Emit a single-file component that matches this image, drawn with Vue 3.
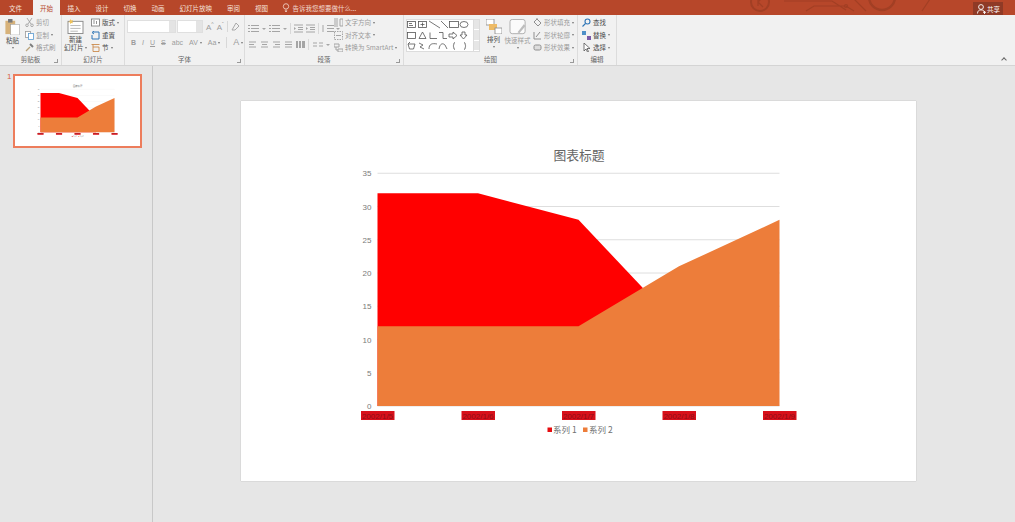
<script setup>
const tabs = ['文件', '开始', '插入', '设计', '切换', '动画', '幻灯片放映', '审阅', '视图']
const ticks = [35, 30, 25, 20, 15, 10, 5, 0]
const dates = ['2002/1/5', '2002/1/6', '2002/1/7', '2002/1/8', '2002/1/9']

// repères du graphique dans le repère de la diapo (675x380)
const left = 136.5
const stepX = 100.5
const baseY = 305
const unit = 6.65
const px = (i) => left + i * stepX
const py = (v) => baseY - v * unit
const area = (vals) =>
  [[px(0), baseY], ...vals.map((v, i) => [px(i), py(v)]), [px(vals.length - 1), baseY]].map((p) => p.join(',')).join(' ')

// la série 1 passe sous la série 2 après le 4e point
const serie1 = area([32, 32, 28, 12])
const serie2 = area([12, 12, 12, 21, 28])
</script>

<template>
  <div class="app">
    <header class="titlebar">
      <svg class="circuit" viewBox="0 0 260 15" fill="none" stroke="#a23f24" stroke-width="1.2">
        <circle cx="10" cy="2" r="9" stroke-width="2" />
        <path d="M8 -3v9M8 2l5-5M8 2l5 5" />
        <path d="M34 1h48l14 9M56 11l8-5h32l8 5" />
        <circle cx="96" cy="6" r="1.5" />
        <circle cx="132" cy="-3" r="13" stroke-width="2.4" />
        <path d="M104 -1l12 12M172 11l8-12" />
      </svg>
      <nav class="tabs">
        <span v-for="t in tabs" :key="t" class="tab" :class="{ active: t === '开始', first: t === '文件' }">{{ t }}</span>
        <span class="tell">
          <svg width="8" height="9" viewBox="0 0 8 9" fill="none" stroke="#f3d9cf" stroke-width=".8">
            <circle cx="4" cy="3.400" r="2.700" /><path d="M2.800 7.200h2.400M3 8.500h2" />
          </svg>
          告诉我您想要做什么...
        </span>
      </nav>
      <button class="share">
        <svg width="9" height="10" viewBox="0 0 9 10" fill="none" stroke="#fff" stroke-width=".9">
          <circle cx="4" cy="3" r="2.400" /><path d="M.5 9.500c0-2.500 1.500-3.600 3.500-3.600s3 .8 3.400 2M6 8.300h3M7.500 7v3" />
        </svg>
        <span>共享</span>
      </button>
    </header>

    <section class="ribbon">
      <!-- presse-papiers -->
      <div class="group g-clip">
        <div class="group-body clip">
          <div class="big paste">
            <svg width="15" height="16" viewBox="0 0 16 18">
              <rect x="0" y="2" width="11" height="15" fill="#d7b27a" />
              <rect x="3" y="0" width="5" height="4" fill="#77787a" />
              <rect x="6" y="6" width="10" height="12" fill="#fff" stroke="#9a9a9a" stroke-width=".6" />
            </svg>
            <span class="lbl">粘贴</span>
            <span class="caret solo"></span>
          </div>
          <div class="stack faded">
            <div class="item">
              <svg class="ico" viewBox="0 0 9 9" fill="none" stroke="#9a9a9a" stroke-width=".8">
                <path d="M2 0l4 6M7 0L3 6" /><circle cx="2" cy="7.300" r="1.300" /><circle cx="7" cy="7.300" r="1.300" />
              </svg>
              剪切
            </div>
            <div class="item">
              <svg class="ico" viewBox="0 0 9 9" fill="#fff" stroke="#9a9a9a" stroke-width=".8">
                <rect x=".5" y=".5" width="5" height="6" /><rect x="3.500" y="2.500" width="5" height="6" stroke="#5a9bd0" />
              </svg>
              复制 <span class="caret"></span>
            </div>
            <div class="item">
              <svg class="ico" viewBox="0 0 9 9" fill="none" stroke-width="1.200">
                <path d="M1 8l4-4" stroke="#b9a27a" /><path d="M5 1l3 3" stroke="#7e7e7e" stroke-width="2" />
              </svg>
              格式刷
            </div>
          </div>
        </div>
        <div class="group-label">剪贴板<i class="launcher"></i></div>
      </div>

      <!-- diapositives -->
      <div class="group g-slides">
        <div class="group-body slides">
          <div class="big new-slide">
            <svg width="17" height="15" viewBox="0 0 17 16">
              <rect x=".5" y="2.500" width="16" height="13" fill="#fff" stroke="#8a8a8a" />
              <path d="M3 7h11M3 10h11M3 13h8" stroke="#b5b5b5" />
              <path d="M3 0l1 1.500 2-.5-1 2 1 1.500-2-.3-1 1.300-.4-2L0 3.500 2 3z" fill="#f0c257" />
            </svg>
            <span class="lbl">新建</span>
            <span class="lbl">幻灯片 <span class="caret"></span></span>
          </div>
          <div class="stack">
            <div class="item">
              <svg class="ico" viewBox="0 0 9 9" fill="#fff" stroke="#777" stroke-width=".8">
                <rect x=".5" y="1" width="8" height="7" /><path d="M2 3h2M2 5h2M5.500 3v3" />
              </svg>
              版式 <span class="caret"></span>
            </div>
            <div class="item">
              <svg class="ico" viewBox="0 0 9 9" fill="none" stroke="#2e75b6" stroke-width="1">
                <path d="M2 1h6v7H1V4" /><path d="M3 0L1 1.500 3 3" />
              </svg>
              重置
            </div>
            <div class="item">
              <svg class="ico" viewBox="0 0 9 9" fill="none" stroke="#c77f3a" stroke-width=".8">
                <path d="M.5 1.500h8M2 1.500v7M2 4h6v4.500H2" />
              </svg>
              节 <span class="caret"></span>
            </div>
          </div>
        </div>
        <div class="group-label">幻灯片</div>
      </div>

      <!-- police -->
      <div class="group g-font">
        <div class="group-body font">
          <div class="row">
            <span class="combo w1"><i></i></span>
            <span class="combo w2"><i></i></span>
            <span class="glyph grow">A<sup>^</sup></span>
            <span class="glyph grow">A<sup>ˇ</sup></span>
            <span class="sep"></span>
            <svg class="ico soft" viewBox="0 0 9 9" fill="none" stroke="#a9a9a9"><path d="M1 8l4-7 3 3-4 4z" /></svg>
          </div>
          <div class="row fmt">
            <b>B</b><i>I</i><u>U</u><s>S</s><span>abc</span><span>AV <span class="caret"></span></span><span>Aa <span class="caret"></span></span>
            <span class="sep"></span><span class="bigA">A <span class="caret"></span></span>
          </div>
        </div>
        <div class="group-label">字体<i class="launcher"></i></div>
      </div>

      <!-- paragraphe -->
      <div class="group g-para">
        <div class="group-body para">
          <div class="para-left">
            <div class="row">
              <svg v-for="n in 2" :key="n" class="ico wide" viewBox="0 0 18 9" stroke="#a5a5a5" fill="none">
                <path d="M3 1.500h8M3 4.500h8M3 7.500h8M0 1.500h2M0 4.500h2M0 7.500h2" /><path d="M14 4l2 2 2-2z" fill="#a5a5a5" stroke="none" />
              </svg>
              <span class="sep"></span>
              <svg v-for="n in 2" :key="'i' + n" class="ico" viewBox="0 0 9 9" stroke="#a5a5a5" fill="none">
                <path d="M0 1h9M4 3.500h5M4 5.500h5M0 8h9" /><path d="M0 3v3l2-1.500z" fill="#a5a5a5" stroke="none" />
              </svg>
              <span class="sep"></span>
              <svg class="ico wide" viewBox="0 0 18 9" stroke="#a5a5a5" fill="none">
                <path d="M1 1v7M5 1.500h7M5 4.500h7M5 7.500h7" /><path d="M14 4l2 2 2-2z" fill="#a5a5a5" stroke="none" />
              </svg>
            </div>
            <div class="row">
              <svg v-for="d in ['M1 2h7M1 4.500h5M1 7h7', 'M1 2h7M2 4.500h5M1 7h7', 'M1 2h7M3 4.500h5M1 7h7', 'M1 2h7M1 4.500h7M1 7h7']" :key="d" class="ico" viewBox="0 0 9 9" stroke="#a5a5a5" fill="none">
                <path :d="d" />
              </svg>
              <svg class="ico" viewBox="0 0 9 9" fill="#a5a5a5"><path d="M0 1h9v7H0zM2 1v7h1V1zM5 1v7h1V1z" fill-rule="evenodd" /></svg>
              <span class="sep"></span>
              <svg class="ico wide" viewBox="0 0 18 9" stroke="#a5a5a5" fill="none">
                <path d="M1 3h4M7 3h4M1 6h4M7 6h4" /><path d="M14 4l2 2 2-2z" fill="#a5a5a5" stroke="none" />
              </svg>
            </div>
          </div>
          <div class="stack faded">
            <div class="item">
              <svg class="ico" viewBox="0 0 9 9" stroke="#a5a5a5" fill="none"><path d="M1 0v9M3 0v9M6 1h3v7H6z" /></svg>
              文字方向 <span class="caret"></span>
            </div>
            <div class="item">
              <svg class="ico" viewBox="0 0 9 9" stroke="#a5a5a5" fill="none"><path d="M.5.5h8v8h-8z" stroke-dasharray="1.500 1" /><path d="M2 4.500h5" /></svg>
              对齐文本 <span class="caret"></span>
            </div>
            <div class="item">
              <svg class="ico" viewBox="0 0 9 9" stroke="#a5a5a5" fill="none"><path d="M0 1h5v3H0zM4 6h5v3H4zM2 4v3h2" /></svg>
              转换为 SmartArt <span class="caret"></span>
            </div>
          </div>
        </div>
        <div class="group-label">段落<i class="launcher"></i></div>
      </div>

      <!-- dessin -->
      <div class="group g-draw">
        <div class="group-body draw">
          <div class="gallery">
            <svg width="66" height="31" viewBox="0 0 66 31" fill="none" stroke="#555" stroke-width=".8">
              <rect x=".5" y="1.500" width="8" height="6" /><path d="M2 3.500h3M2 5.500h4" />
              <rect x="11.500" y="1.500" width="8" height="6" /><path d="M15.500 2.500v4M13.500 4.500h4" />
              <path d="M22 1l11 7M34 1l7 7" />
              <rect x="42.500" y="1.500" width="9" height="6" />
              <ellipse cx="57" cy="4.500" rx="4" ry="3" />
              <rect x=".5" y="12.500" width="8" height="6" />
              <path d="M12 18.500l3.500-6.500 3.500 6.500z" />
              <path d="M23 12.500v6h7M32 12.500h4v6h4" />
              <path d="M42 14h4v-2l4 3.500-4 3.500v-2h-4z" />
              <path d="M55 12h3v3h2l-3.500 4-3.500-4h2z" />
              <path d="M1 24h7l-1.500 5h-4zM1 24l2-2" />
              <path d="M12 23l4 2-3 2 4 2" />
              <path d="M22 29c0-5 3-6 8-5M32 29c1-6 4-6 6-4l2 4" />
              <path d="M48 22.500c-2 0-.5 3-2 3.500 1.500.5 0 3.500 2 3.500M57 22.500c2 0 .5 3 2 3.500-1.500.5 0 3.500-2 3.500" />
            </svg>
            <div class="gallery-scroll"><i></i><i></i><i></i></div>
          </div>
          <div class="big arrange">
            <svg width="16" height="15" viewBox="0 0 16 15">
              <rect x="0" y="0" width="8" height="6" fill="#fff" stroke="#888" stroke-width=".8" />
              <rect x="3" y="5" width="8" height="6" fill="#eebb66" />
              <rect x="9" y="9" width="7" height="6" fill="#fff" stroke="#888" stroke-width=".8" />
            </svg>
            <span class="lbl">排列</span>
            <span class="caret solo"></span>
          </div>
          <div class="big quick">
            <svg width="18" height="16" viewBox="0 0 19 18">
              <rect x=".5" y=".5" width="17" height="16" rx="2.500" fill="#fbfbfb" stroke="#a8a8a8" />
              <path d="M9 15l7-9 2 2-7 8z" fill="#bdbdbd" />
            </svg>
            <span class="lbl">快速样式</span>
            <span class="caret solo"></span>
          </div>
          <div class="stack faded">
            <div class="item">
              <svg class="ico" viewBox="0 0 9 9" stroke="#8f8f8f" fill="none"><path d="M4 1l4 4-3 3-4-4zM4 1V0" /></svg>
              形状填充 <span class="caret"></span>
            </div>
            <div class="item">
              <svg class="ico" viewBox="0 0 9 9" stroke="#8f8f8f" fill="none"><path d="M1 1v7h7M3 6l4-5" /></svg>
              形状轮廓 <span class="caret"></span>
            </div>
            <div class="item">
              <svg class="ico" viewBox="0 0 9 9" stroke="#8f8f8f" fill="#ddd"><rect x="1" y="2" width="7" height="5" rx="1.500" /></svg>
              形状效果 <span class="caret"></span>
            </div>
          </div>
        </div>
        <div class="group-label">绘图<i class="launcher"></i></div>
      </div>

      <!-- edition -->
      <div class="group g-edit">
        <div class="group-body edit">
          <div class="stack">
            <div class="item">
              <svg class="ico" viewBox="0 0 9 9" stroke="#2e75b6" fill="none" stroke-width="1.100"><circle cx="5.500" cy="3.500" r="2.500" /><path d="M3.500 5.500L.5 8.500" /></svg>
              查找
            </div>
            <div class="item">
              <svg class="ico" viewBox="0 0 9 9" fill="#7a5aa8"><rect x="0" y="0" width="4" height="4" fill="#4d8fc7" /><rect x="5" y="5" width="4" height="4" /></svg>
              替换 <span class="caret"></span>
            </div>
            <div class="item">
              <svg class="ico" viewBox="0 0 9 9" stroke="#555" fill="#fff" stroke-width=".8"><path d="M2 0v8l2-2 1.500 3 1-.5L5 5.500h3z" /></svg>
              选择 <span class="caret"></span>
            </div>
          </div>
        </div>
        <div class="group-label">编辑</div>
      </div>

      <span class="collapse"></span>
    </section>

    <main class="workspace">
      <aside class="thumbs">
        <span class="num">1</span>
        <div class="thumb">
          <svg viewBox="0 0 675 380" width="125" height="70"><use href="#slide-chart" /></svg>
        </div>
      </aside>
      <div class="stage">
        <div class="slide">
          <svg viewBox="0 0 675 380" width="675" height="380" class="chart">
            <g id="slide-chart">
              <text x="338" y="59" class="chart-title">图表标题</text>
              <g v-for="t in ticks" :key="t">
                <line :x1="left" :x2="px(4)" :y1="py(t)" :y2="py(t)" class="grid" />
                <text :x="left - 6" :y="py(t) + 3" class="tick">{{ t }}</text>
              </g>
              <polygon :points="serie1" fill="#ff0000" />
              <polygon :points="serie2" fill="#ed7d3a" />
              <g v-for="(d, i) in dates" :key="d">
                <rect :x="px(i) - 16.500" y="310" width="33.500" height="9" fill="#d8101a" />
                <text :x="px(i)" y="317.500" class="date">{{ d }}</text>
              </g>
              <rect x="306.500" y="326.500" width="4.500" height="4.500" fill="#e60d10" />
              <text x="312" y="332" class="legend">系列 1</text>
              <rect x="342" y="326.500" width="4.500" height="4.500" fill="#ed7d3a" />
              <text x="348" y="332" class="legend">系列 2</text>
            </g>
          </svg>
        </div>
      </div>
    </main>
  </div>
</template>

<style scoped>
.app,
.app * {
  box-sizing: border-box;
}
.app {
  width: 1015px;
  height: 522px;
  display: flex;
  flex-direction: column;
  overflow: hidden;
  background: #e6e6e6;
  font-family: "Noto Sans CJK SC", "Liberation Sans", sans-serif;
  color: #4a4a4a;
}
.titlebar {
  position: relative;
  height: 15px;
  flex: none;
  display: flex;
  justify-content: space-between;
  background: #b7472a;
  overflow: hidden;
}
.circuit {
  position: absolute;
  top: 0;
  left: 750px;
  width: 260px;
  height: 15px;
}
.tabs {
  display: flex;
  align-items: stretch;
}
.tab {
  display: flex;
  align-items: center;
  padding: 0 7.5px;
  font-size: 6.5px;
  color: #f6e3dc;
}
.tab.first {
  padding: 0 11px 0 9px;
}
.tab.active {
  padding: 0 7px;
  background: #f1f1f1;
  color: #b7472a;
}
.tell {
  display: flex;
  align-items: center;
  gap: 3px;
  margin-left: 6px;
  font-size: 6.5px;
  color: #f3d9cf;
}
.share {
  position: relative;
  display: flex;
  align-items: center;
  gap: 1px;
  width: 30px;
  height: 13px;
  margin: 2px 12px 0 0;
  padding: 0 0 0 4px;
  border: 0;
  background: #8f3a26;
  color: #fff;
  font: inherit;
  font-size: 6.5px;
  white-space: nowrap;
}
.ribbon {
  position: relative;
  height: 51px;
  flex: none;
  display: flex;
  background: #f1f1f1;
  border-bottom: 1px solid #d4d4d4;
}
.group {
  position: relative;
  flex: none;
  display: flex;
  flex-direction: column;
  border-right: 1px solid #dcdcdc;
  font-size: 6.5px;
}
.g-clip { width: 62px; }
.g-slides { width: 63px; }
.g-font { width: 120px; }
.g-para { width: 159px; }
.g-draw { width: 174px; }
.g-edit { width: 39px; }
.group-body {
  flex: 1;
  display: flex;
  min-height: 0;
  padding-top: 2px;
}
.group-label {
  position: relative;
  height: 10px;
  line-height: 9px;
  text-align: center;
  font-size: 6.5px;
  color: #666;
}
.launcher {
  position: absolute;
  right: 3px;
  bottom: 2px;
  width: 4px;
  height: 4px;
  border-right: 1px solid #999;
  border-bottom: 1px solid #999;
}
.big {
  display: flex;
  flex-direction: column;
  align-items: center;
  flex: none;
  line-height: 8px;
}
.big svg {
  margin: 2px 0 1px;
}
.lbl {
  white-space: nowrap;
}
.caret {
  display: inline-block;
  width: 0;
  height: 0;
  vertical-align: middle;
  border: 1.5px solid transparent;
  border-top: 2px solid #777;
  border-bottom: 0;
}
.caret.solo {
  margin-top: 3px;
}
.stack {
  display: flex;
  flex-direction: column;
  justify-content: space-between;
  padding: 1px 0 0;
  height: 35px;
}
.faded {
  color: #9b9b9b;
}
.item {
  display: flex;
  align-items: center;
  gap: 2px;
  white-space: nowrap;
  line-height: 9px;
}
.ico {
  width: 9px;
  height: 9px;
  flex: none;
}
.ico.wide {
  width: 18px;
}
.clip {
  padding-left: 4px;
  gap: 4px;
}
.paste {
  width: 17px;
}
.slides {
  padding-left: 2px;
  gap: 4px;
}
.new-slide {
  width: 23px;
}
.font {
  flex-direction: column;
  padding: 4px 0 0 2px;
  gap: 2px;
}
.row {
  display: flex;
  align-items: center;
  gap: 3px;
  height: 14px;
  color: #9c9c9c;
}
.combo {
  display: block;
  height: 13px;
  background: #fff;
  border: 1px solid #dfdfdf;
  position: relative;
}
.combo.w1 {
  width: 49px;
  margin-right: -2px;
}
.combo.w2 {
  width: 26px;
}
.combo i {
  position: absolute;
  top: 0;
  right: 0;
  bottom: 0;
  width: 6px;
  background: #e4e4e4;
}
.glyph {
  font-size: 8px;
  font-family: "Liberation Sans", sans-serif;
}
.glyph sup {
  font-size: 5px;
}
.sep {
  width: 1px;
  height: 11px;
  background: #d8d8d8;
  flex: none;
}
.fmt {
  gap: 6px;
  padding-left: 4px;
  font-family: "Liberation Sans", sans-serif;
  font-size: 7px;
}
.fmt span {
  white-space: nowrap;
}
.bigA {
  font-size: 9px;
}
.para {
  padding-left: 3px;
  gap: 4px;
}
.para-left {
  width: 82px;
  padding-top: 4px;
  display: flex;
  flex-direction: column;
  gap: 2px;
}
.para-left .row {
  gap: 3px;
}
.draw {
  padding-left: 2px;
  gap: 2px;
}
.gallery {
  display: flex;
  align-self: flex-start;
  height: 33px;
  margin-top: 2px;
  background: #fff;
  border: 1px solid #dcdcdc;
  flex: none;
}
.gallery-scroll {
  width: 6px;
  display: flex;
  flex-direction: column;
  background: #f1f1f1;
  border-left: 1px solid #dcdcdc;
}
.gallery-scroll i {
  flex: 1;
  background: #e6e6e6;
  border-bottom: 1px solid #fff;
}
.arrange {
  width: 17px;
  margin-left: 3px;
}
.quick {
  width: 27px;
  color: #9b9b9b;
}
.edit {
  padding-left: 4px;
}
.collapse {
  position: absolute;
  right: 9px;
  bottom: 3px;
  width: 4px;
  height: 4px;
  border-left: 1px solid #666;
  border-top: 1px solid #666;
  transform: rotate(45deg);
}
.workspace {
  flex: 1;
  display: flex;
  min-height: 0;
}
.thumbs {
  position: relative;
  width: 153px;
  flex: none;
  border-right: 1px solid #c8c8c8;
  padding: 8px 0 0 13px;
}
.num {
  position: absolute;
  left: 7px;
  top: 6px;
  font-size: 8px;
  color: #d8623f;
  font-family: "Liberation Sans", sans-serif;
}
.thumb {
  width: 129px;
  height: 74px;
  background: #fff;
  border: 2px solid #ed7d5c;
  display: flex;
}
.stage {
  flex: 1;
  padding: 35px 0 0 88px;
}
.slide {
  width: 675px;
  height: 380px;
  background: #fff;
  box-shadow: 0 0 1px rgba(0, 0, 0, 0.3);
}
.chart {
  display: block;
}
.chart-title {
  font-size: 12.800px;
  fill: #666;
  text-anchor: middle;
}
.grid {
  stroke: #dedede;
  stroke-width: 1;
}
.tick {
  font-size: 8px;
  fill: #7a7a7a;
  text-anchor: end;
  font-family: "Liberation Sans", sans-serif;
}
.date {
  font-size: 8px;
  fill: #8e0f18;
  text-anchor: middle;
  font-family: "Liberation Sans", sans-serif;
}
.legend {
  font-size: 8.500px;
  fill: #707070;
}
</style>

<style>
html,
body {
  margin: 0;
  background: #e6e6e6;
}
</style>
